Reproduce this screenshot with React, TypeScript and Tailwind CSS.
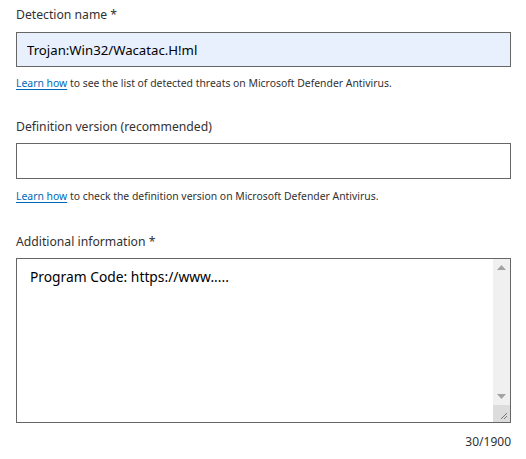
import React, { useState } from "react";

const font = { fontFamily: '"Noto Sans", "Open Sans", Arial, sans-serif' };

const HelpText: React.FC<{ text: string; className?: string }> = ({ text, className }) => (
  <p className={`text-[10.4px] leading-4 text-[#323130] ${className ?? ""}`}>
    <a href="#" className="text-[#0067b8] underline underline-offset-2">
      Learn how
    </a>{" "}
    {text}
  </p>
);

const ScrollArrow: React.FC<{ down?: boolean }> = ({ down }) => (
  <svg width="9" height="5" viewBox="0 0 9 5" className="block">
    {down ? <path d="M0 0h9L4.5 5z" fill="#a3a3a3" /> : <path d="M0 5h9L4.5 0z" fill="#a3a3a3" />}
  </svg>
);

const App: React.FC = () => {
  const [detection, setDetection] = useState("Trojan:Win32/Wacatac.H!ml");
  const [definition, setDefinition] = useState("");
  const [info, setInfo] = useState("Program Code: https://www.....");

  return (
    <div className="w-[526px] h-[459px] bg-white px-4 pt-[5px]" style={font}>
      <label className="block text-[12.2px] leading-5 text-[#323130]">Detection name *</label>
      <input
        value={detection}
        onChange={(e) => setDetection(e.target.value)}
        className="mt-[7px] block w-[495px] h-[35px] border border-[#666] bg-[#e8f0fe] px-[10px] text-[13.2px] text-black outline-none"
        style={font}
      />
      <HelpText className="mt-[8px]" text="to see the list of detected threats on Microsoft Defender Antivirus." />

      <label className="mt-[26px] block text-[12.2px] leading-5 text-[#323130]">Definition version (recommended)</label>
      <input
        value={definition}
        onChange={(e) => setDefinition(e.target.value)}
        className="mt-[6px] block w-[495px] h-[36px] border border-[#666] bg-white px-[10px] text-[13.2px] text-black outline-none"
        style={font}
      />
      <HelpText className="mt-[9px]" text="to check the definition version on Microsoft Defender Antivirus." />

      <label className="mt-[28px] block text-[12.2px] leading-5 text-[#323130]">Additional information *</label>
      <div className="mt-[6px] flex w-[495px] h-[165px] border border-[#666] bg-white">
        <textarea
          value={info}
          onChange={(e) => setInfo(e.target.value)}
          className="flex-1 resize-none overflow-hidden px-[13px] pt-[6px] text-[13.8px] leading-6 text-black outline-none"
          style={font}
        />
        <div className="flex w-[17px] flex-col bg-[#f0f0f0]">
          <div className="flex h-[17px] items-center justify-center">
            <ScrollArrow />
          </div>
          <div className="flex-1" />
          <div className="flex h-[17px] items-center justify-center">
            <ScrollArrow down />
          </div>
          <div className="h-[17px] bg-[#dcdcdc]">
            <svg width="17" height="17" viewBox="0 0 17 17" className="block">
              <path d="M14 8L8 14M14 11L11 14" stroke="#777" strokeWidth="1" />
            </svg>
          </div>
        </div>
      </div>
      <div className="mt-[11px] w-[495px] text-right text-[12px] leading-4 text-[#323130]">30/1900</div>
    </div>
  );
};

export default App;
